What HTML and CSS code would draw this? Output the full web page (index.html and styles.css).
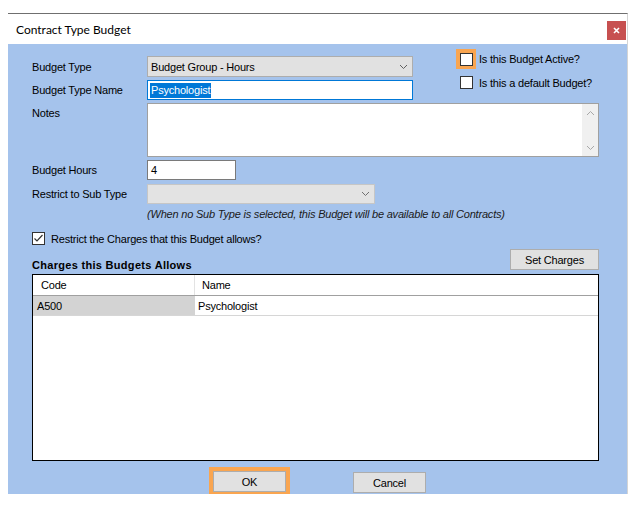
FILE: index.html
```html
<!DOCTYPE html>
<html>
<head>
<meta charset="utf-8">
<title>Contract Type Budget</title>
<link rel="stylesheet" href="styles.css">
</head>
<body>
<div class="window">
  <div class="titlebar">
    <span class="title">Contract Type Budget</span>
    <span class="close-btn">
      <svg width="7" height="7" viewBox="0 0 7 7"><path d="M1 1 L6 6 M6 1 L1 6" stroke="#fff" stroke-width="1.6"/></svg>
    </span>
  </div>
  <div class="body">
    <div class="top">
      <div class="top-fields">
        <div class="label">Budget Type</div>
        <div class="combo">
          <span class="combo-text">Budget Group - Hours</span>
          <svg class="chev" width="9" height="6" viewBox="0 0 9 6"><path d="M1 1 L4.5 4.5 L8 1" fill="none" stroke="#606060" stroke-width="1"/></svg>
        </div>
        <div class="label">Budget Type Name</div>
        <div class="textbox focused"><span class="sel">Psychologist</span></div>
      </div>
      <div class="top-checks">
        <div class="check-row">
          <span class="check-slot focus-ring"><span class="checkbox"></span></span>
          <span class="check-label">Is this Budget Active?</span>
        </div>
        <div class="check-row second">
          <span class="check-slot"><span class="checkbox"></span></span>
          <span class="check-label">Is this a default Budget?</span>
        </div>
      </div>
    </div>

    <div class="row notes-row">
      <div class="label notes-label">Notes</div>
      <div class="memo">
        <div class="memo-text"></div>
        <div class="vscroll">
          <span class="arrow"><svg width="9" height="6" viewBox="0 0 9 6"><path d="M1 5 L4.5 1.5 L8 5" fill="none" stroke="#a8a8a8" stroke-width="1"/></svg></span>
          <span class="arrow"><svg width="9" height="6" viewBox="0 0 9 6"><path d="M1 1 L4.5 4.5 L8 1" fill="none" stroke="#a8a8a8" stroke-width="1"/></svg></span>
        </div>
      </div>
    </div>

    <div class="row hours-row">
      <div class="label">Budget Hours</div>
      <div class="textbox hours">4</div>
    </div>

    <div class="row sub-row">
      <div class="label">Restrict to Sub Type</div>
      <div class="combo disabled">
        <span class="combo-text"></span>
        <svg class="chev" width="9" height="6" viewBox="0 0 9 6"><path d="M1 1 L4.5 4.5 L8 1" fill="none" stroke="#707070" stroke-width="1"/></svg>
      </div>
    </div>

    <div class="hint">(When no Sub Type is selected, this Budget will be available to all Contracts)</div>

    <div class="restrict-row">
      <span class="checkbox checked">
        <svg width="11" height="11" viewBox="0 0 11 11"><path d="M1.5 5.5 L4 8 L9.5 2" fill="none" stroke="#333" stroke-width="1.2"/></svg>
      </span>
      <span class="check-label">Restrict the Charges that this Budget allows?</span>
    </div>

    <div class="charges-head">
      <span class="section-title">Charges this Budgets Allows</span>
      <span class="button set-charges">Set Charges</span>
    </div>

    <div class="grid">
      <div class="grid-head">
        <div class="cell code">Code</div>
        <div class="cell name">Name</div>
      </div>
      <div class="grid-row">
        <div class="cell code">A500</div>
        <div class="cell name">Psychologist</div>
      </div>
    </div>

    <div class="btn-row">
      <span class="focus-ring ok-ring"><span class="button ok">OK</span></span>
      <span class="button cancel">Cancel</span>
    </div>
  </div>
</div>
</body>
</html>
```

FILE: styles.css
```css
* { box-sizing: border-box; }

body {
  margin: 0;
  background: #ffffff;
  font-family: "Liberation Sans", Arial, sans-serif;
  font-size: 11px;
  letter-spacing: -0.2px;
  color: #000;
}

.window {
  margin: 13px 0 0 8px;
  width: 620px;
  border-top: 1px solid #6f6f6f;
  border-right: 1px solid #d4d4d4;
}

.titlebar {
  height: 30px;
  display: flex;
  justify-content: space-between;
  align-items: center;
  padding-left: 8px;
  padding-right: 1px;
  background: #fff;
}

.title {
  font-family: "Lato", sans-serif;
  font-size: 12px;
  letter-spacing: 0;
  color: #000;
}

.close-btn {
  align-self: flex-start;
  margin-top: 7px;
  width: 19px;
  height: 19px;
  background: #c75050;
  display: flex;
  align-items: center;
  justify-content: center;
}

.body {
  height: 450px;
  overflow: hidden;
  background: #a5c3ec;
  padding: 0 28px 0 24px;
}

.top { display: flex; }

.top-fields {
  margin-top: 12px;
  display: grid;
  grid-template-columns: 115px 266px;
  row-gap: 3px;
  align-items: center;
}

.label { width: 115px; flex: none; }

.combo {
  height: 21px;
  background: #e1e1e1;
  border: 1px solid #adadad;
  display: flex;
  align-items: center;
  justify-content: space-between;
  padding: 0 4px 0 3px;
}
.combo.disabled {
  width: 228px;
  height: 20px;
  background: #e3e3e3;
  border-color: #c6c6c6;
}
.chev { display: block; }

.textbox {
  height: 20px;
  background: #fff;
  border: 1px solid #7a7a7a;
  display: flex;
  align-items: center;
  padding-left: 2px;
}
.textbox.focused { border-color: #0078d7; }
.textbox.hours { width: 89px; padding-left: 3px; }

.sel {
  background: #0078d7;
  color: #fff;
  line-height: 15px;
  padding: 0 1px;
}

.top-checks {
  margin-left: 43px;
  margin-top: 5px;
}

.check-row {
  display: flex;
  align-items: center;
  height: 20px;
}
.check-row.second {
  margin-top: 7px;
  height: 13px;
}

.check-slot {
  width: 20px;
  height: 20px;
  display: flex;
  align-items: center;
  justify-content: center;
  padding-left: 1px;
}
.check-row.second .check-slot { height: 13px; }

.focus-ring { background: #f9a550; }

.checkbox {
  display: block;
  width: 13px;
  height: 13px;
  background: #fff;
  border: 1px solid #333;
  flex: none;
}
.checkbox.checked svg { display: block; }

.check-label { margin-left: 3px; }

.row { display: flex; align-items: center; }

.notes-row {
  margin-top: 3px;
  align-items: flex-start;
}
.notes-label { padding-top: 4px; }

.memo {
  flex: 1;
  height: 54px;
  background: #fff;
  border: 1px solid #a0a0a0;
  display: flex;
}
.memo-text { flex: 1; }
.vscroll {
  width: 16px;
  background: #f0f0f0;
  display: flex;
  flex-direction: column;
  justify-content: space-between;
}
.arrow {
  height: 17px;
  display: flex;
  align-items: center;
  justify-content: center;
}

.hours-row { margin-top: 3px; }
.sub-row { margin-top: 4px; }

.hint {
  margin: 3px 0 0 115px;
  line-height: 14px;
  font-style: italic;
  color: #1a1a1a;
}

.restrict-row {
  margin-top: 11px;
  display: flex;
  align-items: center;
  height: 13px;
}
.restrict-row .check-label { margin-left: 6px; }

.charges-head {
  margin-top: 4px;
  display: flex;
  justify-content: space-between;
  align-items: flex-end;
}
.section-title {
  font-weight: bold;
  letter-spacing: 0.3px;
  line-height: 13px;
  margin-bottom: -2px;
}

.button {
  height: 21px;
  background: #e1e1e1;
  border: 1px solid #adadad;
  display: flex;
  align-items: center;
  justify-content: center;
  font-size: 11px;
}
.set-charges { width: 89px; }

.grid {
  margin-top: 4px;
  height: 187px;
  background: #fff;
  border: 1px solid #000;
}
.grid-head {
  display: flex;
  height: 21px;
  border-bottom: 1px solid #a0a0a0;
}
.grid-row {
  display: flex;
  height: 20px;
  border-bottom: 1px solid #d6d6d6;
}
.cell {
  display: flex;
  align-items: center;
}
.cell.code {
  width: 162px;
  flex: none;
}
.cell.name { flex: 1; }
.grid-head .cell.code {
  border-right: 1px solid #e3e3e3;
  padding-left: 8px;
}
.grid-head .cell.name { padding-left: 7px; }
.grid-row .cell.code {
  background: #d3d3d3;
  padding-left: 4px;
}
.grid-row .cell.name { padding-left: 3px; }

.btn-row {
  margin-top: 6px;
  display: flex;
  align-items: flex-start;
  padding-left: 177px;
  gap: 63px;
}
.ok-ring {
  display: block;
  padding: 4px;
}
.ok, .cancel { width: 73px; }
.cancel { margin-top: 5px; }
```
